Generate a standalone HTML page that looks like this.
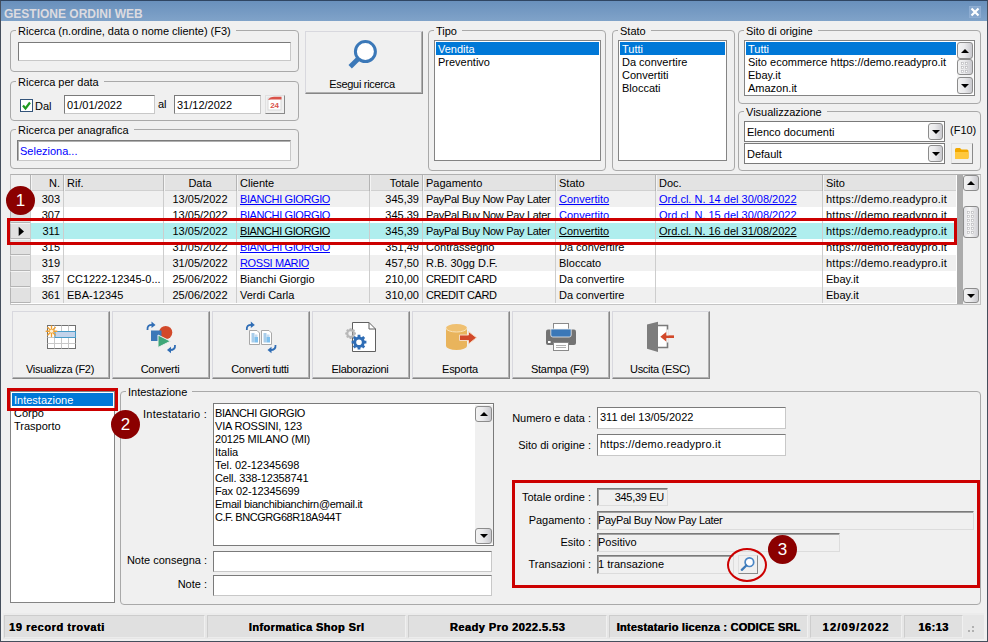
<!DOCTYPE html>
<html lang="it"><head><meta charset="utf-8"><title>GESTIONE ORDINI WEB</title>
<style>
*{box-sizing:border-box}
html,body{margin:0;padding:0}
body{width:988px;height:642px;position:relative;overflow:hidden;background:#f0f0f0;font:11px "Liberation Sans",sans-serif;color:#000}
div,span{position:absolute;white-space:nowrap}
span{position:static}
#win{left:0;top:0;width:988px;height:642px;border:1px solid #454e5c;border-top-color:#2f4562}
#win2{display:none}
#title{left:1px;top:1px;width:986px;height:20px;background:linear-gradient(#6990bc,#80a3c9)}
#title b{position:absolute;left:3px;top:6px;font:bold 12px "Liberation Sans",sans-serif;color:#dcdbe0}
.gb{border:1px solid #a9a9a9;border-radius:4px}
.gl{background:#f0f0f0;padding:0 5px 0 2px;height:13px;line-height:13px}
.in{background:#fff;border:1px solid #7a7a7a;border-right-color:#c8c8c8;border-bottom-color:#c8c8c8;line-height:19px;padding-left:2px}
.ro{background:#f0f0f0;border:1px solid #7a7a7a;border-right-color:#dcdcdc;border-bottom-color:#dcdcdc;box-shadow:inset 1px 1px 0 #a0a0a0;line-height:16px;padding-left:0}
.lb{background:#fff;border:1px solid #848484}
.li{left:1px;height:13px;line-height:15px;padding-left:2px}
.li.s{background:#0078d7;color:#fff}
.btn{border:1px solid #d8d8de;border-right:1px solid #868686;border-bottom:1px solid #868686;box-shadow:inset -1px -1px 0 #b0b0b0;background:#f0f0f0;text-align:center}
.btn .t{left:0;width:100%;text-align:center;letter-spacing:-.3px}
.sb{border:1px solid #8c8c8c;border-radius:3px;background:linear-gradient(90deg,#f2f2f2,#eaeaec 45%,#c9c9ce)}
.sb i{position:absolute;left:50%;top:50%;width:0;height:0;border:4px solid transparent;margin-left:-4px}
.sb.u i{border-bottom:4px solid #000;border-top:0;margin-top:-2px}
.sb.d i{border-top:4px solid #000;border-bottom:0;margin-top:-2px}
.c{overflow:hidden;line-height:16px;padding:0 3px}
.c.h{line-height:17px}
.ghead{background:#e3e3e3;border-bottom:1px solid #d0d0d0}
.lk{color:#0000ff}
.lk2{color:#000}
.vl{width:1px;background:#cdcdcd}
.vh{width:2px;background:#b4b4b4;border-right:1px solid #f4f4f4}
.sel{left:10px;width:21px;height:16px;background:#e1e1e1;border-bottom:1px solid #b4b4b4;border-left:1px solid #b4b4b4;border-top:1px solid #f4f4f4}
.rr{border:3px solid #cc0000}
.badge{width:29px;height:29px;border-radius:50%;background:#8b0000;color:#fff;text-align:center;font:17px/29px "Liberation Sans",sans-serif}
.lab{text-align:right;line-height:13px}
.st{top:615px;height:23px;background:#e0e0e0;border:1px solid #cdcdcd;border-right-color:#f0f0f0;border-bottom-color:#ececec;text-shadow:.35px 0 0 #000;font:bold 11px/23px "Liberation Sans",sans-serif;text-align:center}
</style></head><body>
<div id="title"><b>GESTIONE ORDINI WEB</b></div>
<svg style="position:absolute;left:969px;top:6px" width="12" height="12" viewBox="0 0 12 12"><rect x=".5" y=".5" width="11" height="11" fill="#86a7cd" stroke="#8eadd2" stroke-width="1"/><path d="M2.5 2.5 L9.5 9.5 M9.5 2.5 L2.5 9.5" stroke="#fff" stroke-width="2.2"/></svg>

<!-- search groups -->
<div class="gb" style="left:10px;top:30px;width:289px;height:42px"></div>
<div class="gl" style="left:16px;top:25px">Ricerca (n.ordine, data o nome cliente) (F3)</div>
<div class="in" style="left:18px;top:42px;width:273px;height:19px"></div>

<div class="gb" style="left:10px;top:81px;width:289px;height:40px"></div>
<div class="gl" style="left:16px;top:76px">Ricerca per data</div>
<div style="left:20px;top:99px;width:13px;height:13px;background:#fff;border:1px solid #33547a"></div>
<svg style="position:absolute;left:20px;top:99px" width="13" height="13" viewBox="0 0 13 13"><path d="M3 6.5 L5.5 9.5 L10 3.5" fill="none" stroke="#1f9a1f" stroke-width="2.200"/></svg>
<div style="left:35px;top:100px;line-height:13px">Dal</div>
<div class="in" style="left:64px;top:95px;width:91px;height:19px">01/01/2022</div>
<div style="left:158px;top:98px;line-height:13px">al</div>
<div class="in" style="left:174px;top:95px;width:87px;height:19px">31/12/2022</div>
<div style="left:265px;top:95px;width:20px;height:19px;border:1px solid #e0e0e0;border-right-color:#8a8a8a;border-bottom-color:#8a8a8a;background:#f0f0f0"></div>
<svg style="position:absolute;left:267px;top:96px" width="16" height="15" viewBox="0 0 16 15"><rect x="1" y="2" width="13" height="12" fill="#fff" stroke="#d8d8d8"/><path d="M1 4 Q3 0.5 8 0.8 L14.5 0.8 L14.5 3.5 L4 3.5 Z" fill="#d9534a"/><text x="7.6" y="12" font-family="Liberation Sans, sans-serif" font-size="8" font-weight="bold" fill="#d9534a" text-anchor="middle">24</text></svg>

<div class="gb" style="left:10px;top:129px;width:289px;height:40px"></div>
<div class="gl" style="left:16px;top:124px">Ricerca per anagrafica</div>
<div class="in" style="left:17px;top:140px;width:274px;height:21px;line-height:21px;color:#0000ff;box-shadow:inset 1px 1px 0 #b0b0b0">Seleziona...</div>

<!-- Esegui ricerca -->
<div class="btn" style="left:305px;top:31px;width:118px;height:63px"><div class="t" style="top:46px;left:-2px;line-height:13px">Esegui ricerca</div></div>
<svg style="position:absolute;left:345px;top:38px" width="36" height="34" viewBox="0 0 36 34"><circle cx="20.400" cy="13.600" r="10" fill="#fff" stroke="#3b78b8" stroke-width="3"/><path d="M13.300 20.700 L5.200 28.800" stroke="#3b78b8" stroke-width="4.800"/></svg>

<!-- Tipo -->
<div class="gb" style="left:428px;top:30px;width:178px;height:141px"></div>
<div class="gl" style="left:434px;top:25px">Tipo</div>
<div class="lb" style="left:434px;top:40px;width:167px;height:121px">
 <div class="li s" style="top:1px;width:163px">Vendita</div>
 <div class="li" style="top:14px;width:163px">Preventivo</div>
</div>
<!-- Stato -->
<div class="gb" style="left:612px;top:30px;width:123px;height:141px"></div>
<div class="gl" style="left:618px;top:25px">Stato</div>
<div class="lb" style="left:618px;top:40px;width:109px;height:121px">
 <div class="li s" style="top:1px;width:105px">Tutti</div>
 <div class="li" style="top:14px;width:105px">Da convertire</div>
 <div class="li" style="top:27px;width:105px">Convertiti</div>
 <div class="li" style="top:40px;width:105px">Bloccati</div>
</div>
<!-- Sito di origine -->
<div class="gb" style="left:738px;top:30px;width:243px;height:74px"></div>
<div class="gl" style="left:744px;top:25px">Sito di origine</div>
<div class="lb" style="left:744px;top:40px;width:231px;height:56px">
 <div class="li s" style="top:1px;width:210px">Tutti</div>
 <div class="li" style="top:14px;width:210px">Sito ecommerce https://demo.readypro.it</div>
 <div class="li" style="top:27px;width:210px">Ebay.it</div>
 <div class="li" style="top:40px;width:210px">Amazon.it</div>
 <div style="left:212px;top:1px;width:16px;height:52px;background:#f4f4f4"></div>
 <div class="sb u" style="left:212px;top:1px;width:16px;height:17px"><i></i></div>
 <div class="sb" style="left:212px;top:18px;width:16px;height:16px"></div>
 <svg style="position:absolute;left:216px;top:21px" width="8" height="11" viewBox="0 0 8 11"><g fill="#fff" stroke="#b4b4b8" stroke-width=".6"><rect x=".5" y=".5" width="2" height="2"/><rect x="4.500" y=".5" width="2" height="2"/><rect x=".5" y="4.500" width="2" height="2"/><rect x="4.500" y="4.500" width="2" height="2"/><rect x=".5" y="8.500" width="2" height="2"/><rect x="4.500" y="8.500" width="2" height="2"/></g></svg>
 <div class="sb d" style="left:212px;top:36px;width:16px;height:17px"><i></i></div>
</div>
<!-- Visualizzazione -->
<div class="gb" style="left:738px;top:111px;width:243px;height:60px"></div>
<div class="gl" style="left:744px;top:106px">Visualizzazione</div>
<div class="in" style="left:744px;top:121px;width:201px;height:21px;line-height:21px;border-color:#7a7a7a">Elenco documenti<div class="sb d" style="left:183px;top:1px;width:15px;height:17px;line-height:0"><i></i></div></div>
<div class="in" style="left:744px;top:143px;width:201px;height:21px;line-height:21px;border-color:#7a7a7a">Default<div class="sb d" style="left:183px;top:1px;width:15px;height:17px;line-height:0"><i></i></div></div>
<div style="left:950px;top:124px;line-height:13px">(F10)</div>
<div style="left:951px;top:143px;width:22px;height:21px;border:1px solid #e0e0e0;border-right-color:#8a8a8a;border-bottom-color:#8a8a8a"></div>
<svg style="position:absolute;left:954px;top:147px" width="16" height="13" viewBox="0 0 16 13"><path d="M1 2.5 Q1 1 2.5 1 L6 1 L7.5 2.5 L13 2.5 Q14.5 2.5 14.5 4 L14.5 10.5 Q14.5 12 13 12 L2.5 12 Q1 12 1 10.5 Z" fill="#f2a900"/><path d="M1 5 L14.5 5 L14.5 10.5 Q14.5 12 13 12 L2.5 12 Q1 12 1 10.5 Z" fill="#ffc83d"/></svg>

<!-- grid -->
<div style="left:10px;top:174px;width:971px;height:131px;background:#fff;border:1px solid #c4c4c4;border-top-color:#b0b0b0"></div><div style="left:11px;top:175px;width:20px;height:16px;background:#f0f0f0"></div>
<div class="ghead" style="left:31px;top:175px;width:925px;height:16px"></div>
<div class="c h" style="left:31px;top:175px;width:32px;height:16px;text-align:right;"><span>N.</span></div>
<div class="c h" style="left:64px;top:175px;width:99px;height:16px;text-align:left;"><span>Rif.</span></div>
<div class="c h" style="left:164px;top:175px;width:72px;height:16px;text-align:center;"><span>Data</span></div>
<div class="c h" style="left:237px;top:175px;width:132px;height:16px;text-align:left;"><span>Cliente</span></div>
<div class="c h" style="left:370px;top:175px;width:52px;height:16px;text-align:right;"><span>Totale</span></div>
<div class="c h" style="left:423px;top:175px;width:132px;height:16px;text-align:left;"><span>Pagamento</span></div>
<div class="c h" style="left:556px;top:175px;width:99px;height:16px;text-align:left;"><span>Stato</span></div>
<div class="c h" style="left:656px;top:175px;width:166px;height:16px;text-align:left;"><span>Doc.</span></div>
<div class="c h" style="left:823px;top:175px;width:133px;height:16px;text-align:left;"><span>Sito</span></div>
<div style="left:31px;top:191px;width:925px;height:16px;background:#f0f0f0"></div>
<div class="sel" style="top:191px"></div>
<div class="c " style="left:31px;top:191px;width:32px;height:16px;text-align:right;"><span>303</span></div>
<div class="c " style="left:164px;top:191px;width:72px;height:16px;text-align:center;"><span>13/05/2022</span></div>
<div class="c lk" style="left:237px;top:191px;width:132px;height:16px;text-align:left;letter-spacing:-.4px;"><span><u>BIANCHI GIORGIO</u></span></div>
<div class="c " style="left:370px;top:191px;width:52px;height:16px;text-align:right;"><span>345,39</span></div>
<div class="c " style="left:423px;top:191px;width:132px;height:16px;text-align:left;letter-spacing:-.32px;"><span>PayPal Buy Now Pay Later</span></div>
<div class="c lk" style="left:556px;top:191px;width:99px;height:16px;text-align:left;"><span><u>Convertito</u></span></div>
<div class="c lk" style="left:656px;top:191px;width:166px;height:16px;text-align:left;"><span><u>Ord.cl. N. 14 del 30/08/2022</u></span></div>
<div class="c " style="left:823px;top:191px;width:133px;height:16px;text-align:left;letter-spacing:.23px;"><span>https://demo.readypro.it</span></div>
<div style="left:31px;top:207px;width:925px;height:16px;background:#ffffff"></div>
<div class="sel" style="top:207px"></div>
<div class="c " style="left:31px;top:207px;width:32px;height:16px;text-align:right;"><span>307</span></div>
<div class="c " style="left:164px;top:207px;width:72px;height:16px;text-align:center;"><span>13/05/2022</span></div>
<div class="c lk" style="left:237px;top:207px;width:132px;height:16px;text-align:left;letter-spacing:-.4px;"><span><u>BIANCHI GIORGIO</u></span></div>
<div class="c " style="left:370px;top:207px;width:52px;height:16px;text-align:right;"><span>345,39</span></div>
<div class="c " style="left:423px;top:207px;width:132px;height:16px;text-align:left;letter-spacing:-.32px;"><span>PayPal Buy Now Pay Later</span></div>
<div class="c lk" style="left:556px;top:207px;width:99px;height:16px;text-align:left;"><span><u>Convertito</u></span></div>
<div class="c lk" style="left:656px;top:207px;width:166px;height:16px;text-align:left;"><span><u>Ord.cl. N. 15 del 30/08/2022</u></span></div>
<div class="c " style="left:823px;top:207px;width:133px;height:16px;text-align:left;letter-spacing:.23px;"><span>https://demo.readypro.it</span></div>
<div style="left:31px;top:223px;width:925px;height:16px;background:#afeeee"></div>
<div class="sel" style="top:223px"></div>
<div class="c " style="left:31px;top:223px;width:32px;height:16px;text-align:right;"><span>311</span></div>
<div class="c " style="left:164px;top:223px;width:72px;height:16px;text-align:center;"><span>13/05/2022</span></div>
<div class="c lk2" style="left:237px;top:223px;width:132px;height:16px;text-align:left;letter-spacing:-.4px;"><span><u>BIANCHI GIORGIO</u></span></div>
<div class="c " style="left:370px;top:223px;width:52px;height:16px;text-align:right;"><span>345,39</span></div>
<div class="c " style="left:423px;top:223px;width:132px;height:16px;text-align:left;letter-spacing:-.32px;"><span>PayPal Buy Now Pay Later</span></div>
<div class="c lk2" style="left:556px;top:223px;width:99px;height:16px;text-align:left;"><span><u>Convertito</u></span></div>
<div class="c lk2" style="left:656px;top:223px;width:166px;height:16px;text-align:left;"><span><u>Ord.cl. N. 16 del 31/08/2022</u></span></div>
<div class="c " style="left:823px;top:223px;width:133px;height:16px;text-align:left;letter-spacing:.23px;"><span>https://demo.readypro.it</span></div>
<div style="left:31px;top:239px;width:925px;height:16px;background:#ffffff"></div>
<div class="sel" style="top:239px"></div>
<div class="c " style="left:31px;top:239px;width:32px;height:16px;text-align:right;"><span>315</span></div>
<div class="c " style="left:164px;top:239px;width:72px;height:16px;text-align:center;"><span>31/05/2022</span></div>
<div class="c lk" style="left:237px;top:239px;width:132px;height:16px;text-align:left;letter-spacing:-.4px;"><span><u>BIANCHI GIORGIO</u></span></div>
<div class="c " style="left:370px;top:239px;width:52px;height:16px;text-align:right;"><span>351,49</span></div>
<div class="c " style="left:423px;top:239px;width:132px;height:16px;text-align:left;"><span>Contrassegno</span></div>
<div class="c " style="left:556px;top:239px;width:99px;height:16px;text-align:left;"><span>Da convertire</span></div>
<div class="c " style="left:823px;top:239px;width:133px;height:16px;text-align:left;letter-spacing:.23px;"><span>https://demo.readypro.it</span></div>
<div style="left:31px;top:255px;width:925px;height:16px;background:#f0f0f0"></div>
<div class="sel" style="top:255px"></div>
<div class="c " style="left:31px;top:255px;width:32px;height:16px;text-align:right;"><span>319</span></div>
<div class="c " style="left:164px;top:255px;width:72px;height:16px;text-align:center;"><span>31/05/2022</span></div>
<div class="c lk" style="left:237px;top:255px;width:132px;height:16px;text-align:left;letter-spacing:-.4px;"><span><u>ROSSI MARIO</u></span></div>
<div class="c " style="left:370px;top:255px;width:52px;height:16px;text-align:right;"><span>457,50</span></div>
<div class="c " style="left:423px;top:255px;width:132px;height:16px;text-align:left;"><span>R.B. 30gg D.F.</span></div>
<div class="c " style="left:556px;top:255px;width:99px;height:16px;text-align:left;"><span>Bloccato</span></div>
<div class="c " style="left:823px;top:255px;width:133px;height:16px;text-align:left;letter-spacing:.23px;"><span>https://demo.readypro.it</span></div>
<div style="left:31px;top:271px;width:925px;height:16px;background:#ffffff"></div>
<div class="sel" style="top:271px"></div>
<div class="c " style="left:31px;top:271px;width:32px;height:16px;text-align:right;"><span>357</span></div>
<div class="c " style="left:64px;top:271px;width:99px;height:16px;text-align:left;"><span>CC1222-12345-0...</span></div>
<div class="c " style="left:164px;top:271px;width:72px;height:16px;text-align:center;"><span>25/06/2022</span></div>
<div class="c " style="left:237px;top:271px;width:132px;height:16px;text-align:left;"><span>Bianchi Giorgio</span></div>
<div class="c " style="left:370px;top:271px;width:52px;height:16px;text-align:right;"><span>210,00</span></div>
<div class="c " style="left:423px;top:271px;width:132px;height:16px;text-align:left;letter-spacing:-.4px;"><span>CREDIT CARD</span></div>
<div class="c " style="left:556px;top:271px;width:99px;height:16px;text-align:left;"><span>Da convertire</span></div>
<div class="c " style="left:823px;top:271px;width:133px;height:16px;text-align:left;"><span>Ebay.it</span></div>
<div style="left:31px;top:287px;width:925px;height:16px;background:#f0f0f0"></div>
<div class="sel" style="top:287px"></div>
<div class="c " style="left:31px;top:287px;width:32px;height:16px;text-align:right;"><span>361</span></div>
<div class="c " style="left:64px;top:287px;width:99px;height:16px;text-align:left;"><span>EBA-12345</span></div>
<div class="c " style="left:164px;top:287px;width:72px;height:16px;text-align:center;"><span>25/06/2022</span></div>
<div class="c " style="left:237px;top:287px;width:132px;height:16px;text-align:left;"><span>Verdi Carla</span></div>
<div class="c " style="left:370px;top:287px;width:52px;height:16px;text-align:right;"><span>310,00</span></div>
<div class="c " style="left:423px;top:287px;width:132px;height:16px;text-align:left;letter-spacing:-.4px;"><span>CREDIT CARD</span></div>
<div class="c " style="left:556px;top:287px;width:99px;height:16px;text-align:left;"><span>Da convertire</span></div>
<div class="c " style="left:823px;top:287px;width:133px;height:16px;text-align:left;"><span>Ebay.it</span></div>
<div class="vl" style="left:30px;top:191px;height:112px"></div>
<div class="vh" style="left:30px;top:175px;height:16px"></div>
<div class="vl" style="left:63px;top:191px;height:112px"></div>
<div class="vh" style="left:63px;top:175px;height:16px"></div>
<div class="vl" style="left:163px;top:191px;height:112px"></div>
<div class="vh" style="left:163px;top:175px;height:16px"></div>
<div class="vl" style="left:236px;top:191px;height:112px"></div>
<div class="vh" style="left:236px;top:175px;height:16px"></div>
<div class="vl" style="left:369px;top:191px;height:112px"></div>
<div class="vh" style="left:369px;top:175px;height:16px"></div>
<div class="vl" style="left:422px;top:191px;height:112px"></div>
<div class="vh" style="left:422px;top:175px;height:16px"></div>
<div class="vl" style="left:555px;top:191px;height:112px"></div>
<div class="vh" style="left:555px;top:175px;height:16px"></div>
<div class="vl" style="left:655px;top:191px;height:112px"></div>
<div class="vh" style="left:655px;top:175px;height:16px"></div>
<div class="vl" style="left:822px;top:191px;height:112px"></div>
<div class="vh" style="left:822px;top:175px;height:16px"></div>
<div style="left:957px;top:175px;width:6px;height:129px;background:#ababab"></div>
<div style="left:963px;top:175px;width:17px;height:129px;background:#f0f0f0"></div>
<div class="sb u" style="left:963px;top:175px;width:16px;height:16px"><i></i></div>
<div class="sb" style="left:963px;top:206px;width:16px;height:32px;background:linear-gradient(90deg,#e4e4e8,#f6f6f6 40%,#cfcfd4)"></div><svg style="position:absolute;left:967px;top:211px" width="8" height="23" viewBox="0 0 8 23"><g fill="#fff" stroke="#b4b4b8" stroke-width=".6"><rect x=".5" y=".5" width="2" height="2"/><rect x="4.500" y=".5" width="2" height="2"/><rect x=".5" y="4.500" width="2" height="2"/><rect x="4.500" y="4.500" width="2" height="2"/><rect x=".5" y="8.500" width="2" height="2"/><rect x="4.500" y="8.500" width="2" height="2"/><rect x=".5" y="12.500" width="2" height="2"/><rect x="4.500" y="12.500" width="2" height="2"/><rect x=".5" y="16.500" width="2" height="2"/><rect x="4.500" y="16.500" width="2" height="2"/><rect x=".5" y="20.500" width="2" height="2"/><rect x="4.500" y="20.500" width="2" height="2"/></g></svg>
<div class="sb d" style="left:963px;top:288px;width:16px;height:15px"><i></i></div>
<svg style="position:absolute;left:17px;top:226px" width="8" height="11" viewBox="0 0 8 11"><path d="M1.7 0.800 L7 5.400 L1.700 10 Z" fill="#000"/></svg>
<div class="rr" style="left:7px;top:218px;width:950px;height:27px"></div>
<div class="badge" style="left:6px;top:186px">1</div>

<!-- toolbar -->
<div class="btn" style="left:12px;top:311px;width:98px;height:68px"><div class="t" style="top:51px;left:-1px;line-height:13px">Visualizza (F2)</div></div>
<div class="btn" style="left:112px;top:311px;width:98px;height:68px"><div class="t" style="top:51px;left:-1px;line-height:13px">Converti</div></div>
<div class="btn" style="left:212px;top:311px;width:98px;height:68px"><div class="t" style="top:51px;left:-1px;line-height:13px">Converti tutti</div></div>
<div class="btn" style="left:312px;top:311px;width:98px;height:68px"><div class="t" style="top:51px;left:-1px;line-height:13px">Elaborazioni</div></div>
<div class="btn" style="left:412px;top:311px;width:98px;height:68px"><div class="t" style="top:51px;left:-1px;line-height:13px">Esporta</div></div>
<div class="btn" style="left:512px;top:311px;width:98px;height:68px"><div class="t" style="top:51px;left:-1px;line-height:13px">Stampa (F9)</div></div>
<div class="btn" style="left:612px;top:311px;width:98px;height:68px"><div class="t" style="top:51px;left:-1px;line-height:13px">Uscita (ESC)</div></div>
<!-- icon 1: table -->
<svg style="position:absolute;left:42px;top:320px" width="38" height="34" viewBox="0 0 38 34">
 <rect x="5.5" y="5.5" width="28" height="23" fill="#fff" stroke="#707070"/>
 <path d="M12.5 5.5V28.5M19.5 5.5V28.5M26.5 5.5V28.5M5.5 11.5H33.5M5.5 17.5H33.5M5.5 23.5H33.5" stroke="#c8c8c8" fill="none"/>
 <rect x="13" y="11.5" width="20.5" height="6" fill="#c3d3ea" stroke="#4a9cc8"/>
 <g stroke="#f0a030" stroke-width="1.4" stroke-linecap="round"><path d="M9.500 6V16.500M4.200 11.200H14.800M5.800 7.500L13.200 15M13.200 7.500L5.800 15"/></g>
 <circle cx="9.500" cy="11.200" r="1.600" fill="#fff3d8"/>
</svg>
<!-- icon 2: convert -->
<svg style="position:absolute;left:142px;top:318px" width="40" height="38" viewBox="0 0 40 38">
 <circle cx="23.7" cy="14.5" r="6.6" fill="#d2492a"/>
 <rect x="9" y="12.5" width="10.5" height="10.5" fill="#3b78b8"/>
 <path d="M16 17 L28.5 23.2 L16 29.5 Z" fill="#3fa779" stroke="#f0f0f0" stroke-width="1"/>
 <path d="M5.5 12 Q5 6.5 10.5 6.8" fill="none" stroke="#2f6db5" stroke-width="1.8"/><path d="M9.5 3.5 L13.5 7 L9.5 10 Z" fill="#2f6db5"/>
 <path d="M33 27 Q33.5 32 28 32" fill="none" stroke="#2f6db5" stroke-width="1.8"/><path d="M29 28.8 L25 32 L29 35.2 Z" fill="#2f6db5"/>
</svg>
<!-- icon 3: convert all -->
<svg style="position:absolute;left:242px;top:318px" width="40" height="38" viewBox="0 0 40 38">
 <path d="M7.5 12.5 H15 L17.5 15 V26.5 H7.5 Z" fill="#fff" stroke="#a8a8a8"/>
 <path d="M19.5 12.5 H27 L29.5 15 V26.5 H19.5 Z" fill="#fff" stroke="#a8a8a8"/>
 <rect x="9.5" y="15" width="3" height="9.5" fill="#a9cdea"/><rect x="12.5" y="19" width="3.5" height="5.5" fill="#7fc0ee"/><rect x="12.5" y="16.5" width="3" height="2.5" fill="#c5dcf0"/>
 <rect x="21.5" y="15" width="3" height="9.5" fill="#a9cdea"/><rect x="24.5" y="19" width="3.5" height="5.5" fill="#7fc0ee"/><rect x="24.5" y="16.5" width="3" height="2.5" fill="#c5dcf0"/>
 <path d="M4.8 12 Q4.3 6.5 9.8 6.8" fill="none" stroke="#2f6db5" stroke-width="1.8"/><path d="M8.8 3.5 L12.8 7 L8.8 10 Z" fill="#2f6db5"/>
 <path d="M33.5 27 Q34 32 28.5 32" fill="none" stroke="#2f6db5" stroke-width="1.8"/><path d="M29.5 28.8 L25.5 32 L29.5 35.2 Z" fill="#2f6db5"/>
</svg>
<!-- icon 4: elaborazioni -->
<svg style="position:absolute;left:342px;top:318px" width="40" height="38" viewBox="0 0 40 38">
 <path d="M10.5 4.5 H27 L33.5 11 V33.5 H10.5 Z" fill="#fff" stroke="#606060"/>
 <path d="M27 4.5 V11 H33.5" fill="none" stroke="#606060"/>
 <g transform="translate(8.6 15.6)"><circle r="3.4" fill="none" stroke="#b8b8b8" stroke-width="2.2"/><g stroke="#b8b8b8" stroke-width="2"><path d="M0 -5.4V-3.4M0 5.4V3.4M-5.4 0H-3.4M5.4 0H3.4M-3.8 -3.8L-2.4 -2.4M3.8 3.8L2.4 2.4M-3.8 3.8L-2.4 2.4M3.8 -3.8L2.4 -2.4"/></g><circle r="1.6" fill="#f0f0f0"/></g>
 <g transform="translate(17 24.2)"><circle r="4.3" fill="#fff" stroke="#2f6db5" stroke-width="3"/><g stroke="#2f6db5" stroke-width="2.8"><path d="M0 -7.4V-5M0 7.4V5M-7.4 0H-5M7.4 0H5M-5.2 -5.2L-3.6 -3.6M5.2 5.2L3.6 3.6M-5.2 5.2L-3.6 3.6M5.2 -5.2L3.6 -3.6"/></g></g>
</svg>
<!-- icon 5: esporta -->
<svg style="position:absolute;left:442px;top:318px" width="40" height="38" viewBox="0 0 40 38">
 <path d="M4 10 V28 A10.5 4 0 0 0 25 28 V10 Z" fill="#e9b45c"/>
 <ellipse cx="14.5" cy="10" rx="10.5" ry="4" fill="#efc071"/>
 <path d="M4 10 A10.5 4 0 0 0 25 10" fill="none" stroke="#f8e2b8" stroke-width="1"/>
 <path d="M17.5 17 H26.5 V13.5 L34.5 19.7 L26.5 26 V22.5 H17.5 Z" fill="#d2492a" stroke="#f4d9c0" stroke-width="1"/>
</svg>
<!-- icon 6: stampa -->
<svg style="position:absolute;left:542px;top:318px" width="40" height="38" viewBox="0 0 40 38">
 <rect x="11.5" y="5.5" width="15" height="8" fill="#fff" stroke="#8a8a8a"/>
 <rect x="4" y="11.5" width="30" height="15.5" rx="2" fill="#737373"/>
 <path d="M8.8 11 H29.2 V17 Q29.2 19 27.2 19 H10.8 Q8.800 19 8.800 17 Z" fill="#3b78b8" stroke="#f0f0f0" stroke-width=".8"/>
 <rect x="6" y="23" width="2.6" height="2" fill="#fff"/>
 <rect x="11.500" y="24.500" width="15" height="8" fill="#fff" stroke="#8a8a8a"/>
 <path d="M14 27.500 H24 M14 29.500 H24" stroke="#b0b0b0"/>
</svg>
<!-- icon 7: uscita -->
<svg style="position:absolute;left:642px;top:318px" width="40" height="38" viewBox="0 0 40 38">
 <path d="M15 7.500 H25.500 V29.500 H15" fill="#fff" stroke="#7a7a7a" stroke-width="1.6"/>
 <path d="M5 6.500 L16 3.800 V34 L5 30.800 Z" fill="#7d7d7d"/>
 <path d="M32 18.800 H22" stroke="#d2492a" stroke-width="2.4"/><path d="M18.300 18.800 L24.500 13.800 V23.800 Z" fill="#d2492a"/>
 <rect x="24.500" y="11.500" width="2.200" height="13" fill="#f0f0f0"/>
 <path d="M32 18.800 H22" stroke="#d2492a" stroke-width="2.400"/>
</svg>


<!-- bottom left list -->
<div class="lb" style="left:10px;top:391px;width:105px;height:212px">
 <div class="li s" style="top:1px;width:101px">Intestazione</div>
 <div class="li" style="top:14px">Corpo</div>
 <div class="li" style="top:27px">Trasporto</div>
</div>
<div class="rr" style="left:7px;top:388px;width:111px;height:23px"></div>

<!-- Intestazione group -->
<div class="gb" style="left:120px;top:391px;width:861px;height:214px"></div>
<div class="gl" style="left:126px;top:386px">Intestazione</div>
<div class="badge" style="left:111px;top:410px">2</div>
<div class="lab" style="left:126px;top:408px;width:81px;letter-spacing:.25px">Intestatario :</div>
<div class="lb" style="left:213px;top:403px;width:281px;height:143px;border-color:#7a7a7a"><div style="left:1px;top:3px;line-height:13px;letter-spacing:-0.4px">BIANCHI GIORGIO</div>
<div style="left:1px;top:16px;line-height:13px;letter-spacing:-0.19px">VIA ROSSINI, 123</div>
<div style="left:1px;top:29px;line-height:13px;letter-spacing:-0.2px">20125 MILANO (MI)</div>
<div style="left:1px;top:42px;line-height:13px;letter-spacing:0px">Italia</div>
<div style="left:1px;top:55px;line-height:13px;letter-spacing:-0.04px">Tel. 02-12345698</div>
<div style="left:1px;top:68px;line-height:13px;letter-spacing:-0.14px">Cell. 338-12358741</div>
<div style="left:1px;top:81px;line-height:13px;letter-spacing:-0.12px">Fax 02-12345699</div>
<div style="left:1px;top:94px;line-height:13px;letter-spacing:-0.28px">Email bianchibianchirn@email.it</div>
<div style="left:1px;top:107px;line-height:13px;letter-spacing:-0.45px">C.F. BNCGRG68R18A944T</div>

 <div style="left:261px;top:1px;width:18px;height:139px;background:#f0f0f0"></div>
 <div class="sb u" style="left:261px;top:2px;width:17px;height:16px"><i></i></div>
 <div class="sb d" style="left:261px;top:124px;width:17px;height:16px"><i></i></div>
</div>
<div class="lab" style="left:122px;top:554px;width:85px">Note consegna :</div>
<div class="in" style="left:213px;top:551px;width:279px;height:21px"></div>
<div class="lab" style="left:122px;top:578px;width:85px">Note :</div>
<div class="in" style="left:213px;top:575px;width:279px;height:21px"></div>

<div class="lab" style="left:500px;top:412px;width:91px">Numero e data :</div>
<div class="in" style="left:597px;top:407px;width:189px;height:22px;line-height:18px">311 del 13/05/2022</div>
<div class="lab" style="left:500px;top:439px;width:91px">Sito di origine :</div>
<div class="in" style="left:597px;top:434px;width:189px;height:22px;line-height:18px;letter-spacing:.23px">https://demo.readypro.it</div>

<div class="lab" style="left:500px;top:491px;width:91px">Totale ordine :</div>
<div class="ro" style="left:597px;top:488px;width:71px;height:18px;text-align:right;padding-right:3px;letter-spacing:-.3px">345,39 EU</div>
<div class="lab" style="left:500px;top:514px;width:91px">Pagamento :</div>
<div class="ro" style="left:597px;top:511px;width:377px;height:19px;letter-spacing:-.32px">PayPal Buy Now Pay Later</div>
<div class="lab" style="left:500px;top:536px;width:91px">Esito :</div>
<div class="ro" style="left:597px;top:533px;width:243px;height:19px">Positivo</div>
<div class="lab" style="left:500px;top:558px;width:91px">Transazioni :</div>
<div class="ro" style="left:597px;top:555px;width:137px;height:19px">1 transazione</div>
<div style="left:738px;top:555px;width:20px;height:19px;border:1px solid #e0e0e0;border-right-color:#8a8a8a;border-bottom-color:#8a8a8a;background:#f0f0f0"></div>
<svg style="position:absolute;left:740px;top:556px" width="16" height="16" viewBox="0 0 16 16"><circle cx="9.400" cy="6.200" r="4.300" fill="#fdfdff" stroke="#4a86c5" stroke-width="1.700"/><path d="M6.300 9.500 L1.800 13.800" stroke="#3b78b8" stroke-width="2.300" stroke-linecap="round"/></svg>
<div class="rr" style="left:512px;top:480px;width:468px;height:108px"></div>
<div style="left:727px;top:548px;width:40px;height:34px;border:2.5px solid #cc0000;border-radius:50%"></div>
<div class="badge" style="left:768px;top:535px">3</div>

<!-- status bar -->
<div style="left:3px;top:613px;width:981px;height:26px;background:#e6e6e6;border-top:2px solid #ececec"></div>
<div class="st" style="left:4px;width:201px;text-align:left;padding-left:4px;letter-spacing:.56px">19 record trovati</div>
<div class="st" style="left:207px;width:199px;letter-spacing:.4px">Informatica Shop Srl</div>
<div class="st" style="left:408px;width:199px;letter-spacing:.47px">Ready Pro 2022.5.53</div>
<div class="st" style="left:609px;width:199px;letter-spacing:.22px">Intestatario licenza : CODICE SRL</div>
<div class="st" style="left:810px;width:92px;letter-spacing:1.2px">12/09/2022</div>
<div class="st" style="left:904px;width:59px;letter-spacing:.45px">16:13</div>
<svg style="position:absolute;left:966px;top:624px" width="10" height="10" viewBox="0 0 10 10"><g fill="#b0b0b0"><rect x="6" y="2" width="2" height="2"/><rect x="6" y="6" width="2" height="2"/><rect x="2" y="6" width="2" height="2"/></g></svg>
<div id="win" style="pointer-events:none"></div><div id="win2"></div>
</body></html>
